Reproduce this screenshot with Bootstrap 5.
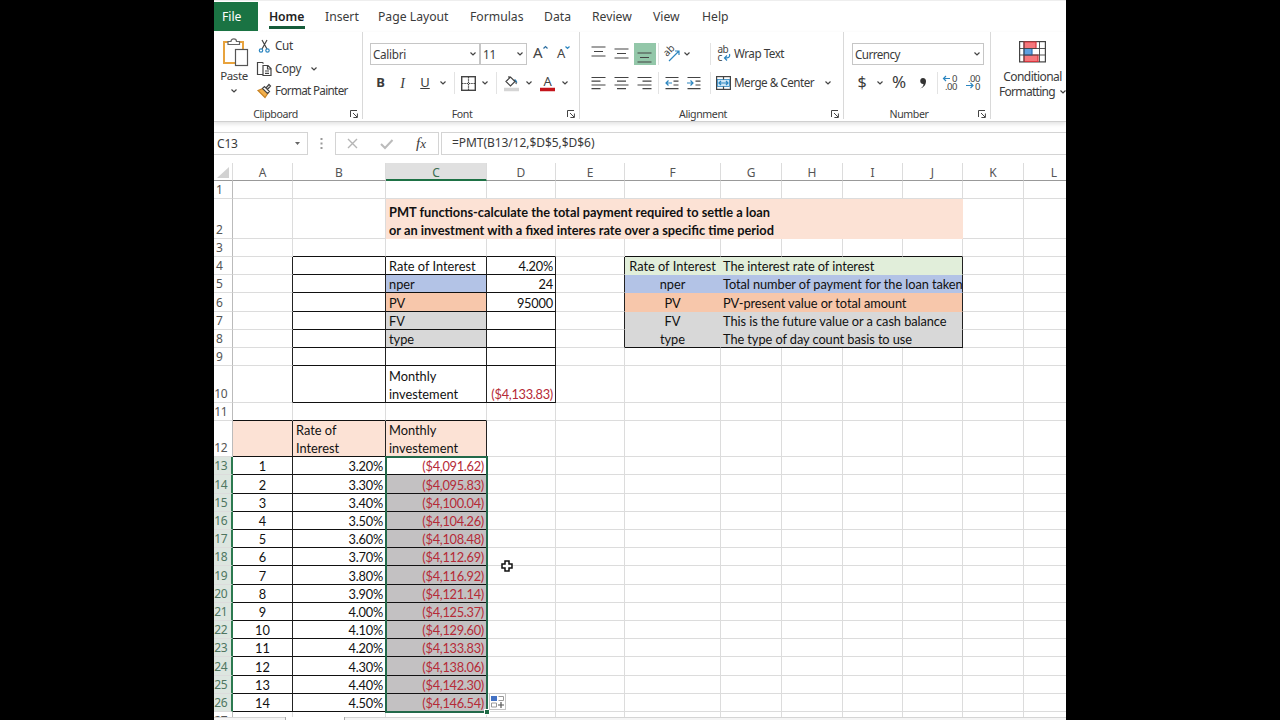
<!DOCTYPE html>
<html lang="en">
<head>
<meta charset="utf-8">
<title>Loan payment - Excel</title>
<link href="https://cdn.jsdelivr.net/npm/bootstrap@5.3.0/dist/css/bootstrap.min.css" rel="stylesheet">
<script src="https://cdn.jsdelivr.net/npm/bootstrap@5.3.0/dist/js/bootstrap.bundle.min.js"></script>
<style>
body{background:#000;height:720px;overflow:hidden;font-family:"Noto Sans","Open Sans",sans-serif;font-size:12px;color:#3b3b3b}
svg{display:block;overflow:visible;fill:none;stroke:#444;stroke-width:1.2;flex:none}
svg text{stroke:none;fill:#444;font-family:"Noto Sans",sans-serif}
.xl{width:852px;height:720px;margin-left:214px;background:#fff;border-top:1px solid #eee;overflow:hidden}
.tabs{height:31px;padding-top:1px;font-size:12.2px;line-height:30px}
.tabs a{color:#3b3b3b;text-decoration:none;white-space:nowrap}
.tabs .file{width:44px;height:29px;background:#1a7343;color:#fff;padding-left:8px;margin-right:11px}
.tabs .on{font-weight:600;color:#222;width:36px;margin-right:20px;height:27px;border-bottom:3px solid #165c3a;letter-spacing:-.1px}
.ribbon{height:90px;border-bottom:1px solid #d0d0d0;box-shadow:0 2px 4px #e2e2e2}
.grp{flex:none;height:87px;padding-top:11px;border-right:1px solid #d9d9d9;white-space:nowrap;position:relative}
.rw{display:grid;height:22px;margin-bottom:7px;align-items:center;justify-items:center}
.rw>.l{justify-self:start}
.cap{font-size:10.6px;letter-spacing:-.4px;position:absolute;left:0;right:0;bottom:-4px;text-align:center;line-height:18px}
.go{position:absolute;right:4px;bottom:1px}
.sep{width:1px;height:22px;background:#e3e3e3}
.sel{border:1px solid #c6c6c6;height:22px;width:100%;padding:0 3px 0 2px;line-height:20px;font-size:11.7px;letter-spacing:-.3px}
.cmd{font-size:11.7px}
.cmd svg:first-child{margin:0 2px}
.fbar{height:41px;padding-top:10px}
.fbar>div{height:23px;border:1px solid #d4d4d4;line-height:20px}
.sheet{position:relative;height:557px;overflow:hidden;font-family:Lato,sans-serif;font-size:12.8px;color:#111}
.rr{display:flex;width:871px}
.cc{flex:none;border-right:1px solid #dcdcdc;border-bottom:1px solid #dcdcdc;line-height:18px;white-space:nowrap;overflow:hidden;display:flex;align-items:flex-end;padding:0 3px}
.cc>span{margin-bottom:-1px}
.cc.kr{border-right-color:#222}.cc.kb{border-bottom-color:#111}
.cc.nr{border-right-color:transparent}.cc.nb{border-bottom-color:transparent}
.cc.c{justify-content:center}.cc.r{justify-content:flex-end;padding-right:2px;letter-spacing:-.2px}
.cc.neg{color:#b52a37;letter-spacing:-.28px}.cc.gs{background:#c3c1c2}
.cc.wide{letter-spacing:-.07px;padding-left:2px}
.peach{background:#fce2d5}.blue{background:#b3c3e6}.orange{background:#f7c7ab}.gray{background:#d8d8d8}.green{background:#e1eeda}
.hd,.rh{font-family:"Noto Sans",sans-serif;color:#555;font-size:12px}
.hd{justify-content:center;border-bottom-color:#999}
.hd>span{margin-bottom:-2px}
.hd.on{background:#e0e0e0;color:#3c6e50;border-bottom:2px solid #1e7145}
.hd.on>span{margin-bottom:-3px}
.rh{padding:0 5px 0 0;justify-content:flex-end;overflow:visible;border-right-color:#bbb;letter-spacing:-.5px}
.rh.n1{justify-content:flex-start;padding-left:2px}
.rh.on{background:#dde6e0;color:#4e7660;border-right:2px solid #2c7a50;padding-right:4px}
.selbox{position:absolute;left:171px;top:293px;width:103px;height:257px;border:2px solid #22694a}
.knob{position:absolute;left:271px;top:547px;width:4px;height:4px;background:#1e6b45;border:1px solid #fff;box-sizing:content-box;margin:-1px}
.qa{position:absolute;left:275px;top:530px;width:17px;height:17px;border:1px solid #c4c4c4;background:#fff}
.cursor{position:absolute;left:287px;top:397px}
.tabbar{position:absolute;left:0;right:0;top:554px;height:3px;background:#f5f5f5;border-top:1px solid #d5d5d5}
.tabbar div{position:absolute;left:71px;width:60px;height:3px;top:-1px;background:#fff;border:solid #aaa;border-width:0 1px}
</style>
</head>
<body>
<svg width="0" height="0" class="position-absolute">
<symbol id="v" viewBox="0 0 6 4" overflow="visible"><path d="M.5 .5 3 3 5.500 .5"/></symbol>
<symbol id="la" viewBox="0 0 8 8"><path d="M.5 7V.5H7M3 3l4 4M7.400 3.500v4h-4" stroke-width="1"/></symbol>
</svg>
<main class="xl">
<nav class="tabs d-flex">
<a class="file">File</a><a class="on">Home</a><a style="width:53px">Insert</a><a style="width:92px">Page Layout</a><a style="width:74px">Formulas</a><a style="width:48px">Data</a><a style="width:61px">Review</a><a style="width:49px">View</a><a>Help</a>
</nav>
<section class="ribbon d-flex">
 <div class="grp" style="width:149px">
  <div class="d-flex" style="margin-top:-9px">
   <div class="d-flex flex-column align-items-center" style="width:40px;padding-top:4px">
    <svg width="28" height="29" style="margin-left:4px"><path d="M6.500 4H2v21h11M18 4h3v7" stroke="#e8a33d" stroke-width="2"/><path d="M6 6.500V3.500h3C9 0 14.500 0 14.500 3.500h3v3z" fill="#fff" stroke="#666"/><rect x="13.500" y="11.500" width="12" height="16" fill="#fff" stroke="#555"/></svg>
    <span style="line-height:18px;font-size:11.500px;letter-spacing:-.4px">Paste</span>
    <svg width="6" height="4" style="margin-top:4px"><use href="#v"/></svg>
   </div>
   <div class="flex-grow-1" style="padding-left:1px">
    <div class="cmd d-flex align-items-center" style="height:23px;letter-spacing:-.3px"><svg width="16" height="16"><path d="M5 2l5 9M10 2 5 11"/><circle cx="4" cy="12.500" r="1.700" stroke="#2c86c0"/><circle cx="10.500" cy="12.500" r="1.700" stroke="#2c86c0"/></svg><span>Cut</span></div>
    <div class="cmd d-flex align-items-center" style="height:23px;letter-spacing:-.3px"><svg width="16" height="16"><path d="M5.500 13.500H.5V1.500h5l1 1M6 4.500h5l3 3v7H6zM10.500 4.500V8H14M8 10h4M8 12.300h4"/></svg><span>Copy</span><svg width="6" height="4" style="margin-left:10px"><use href="#v"/></svg></div>
    <div class="cmd d-flex align-items-center" style="height:22px;letter-spacing:-.68px"><svg width="16" height="16"><path d="M1 7.500 6 5.500l5 4.500-3 4.500z" fill="#f2b04d" stroke="#c98222"/><path d="M5.500 5.500l2-2 5 5-2 2zM9 5l3-3.500L13.500 3l-3 3.500" fill="#fff"/></svg><span>Format Painter</span></div>
   </div>
  </div>
  <div class="cap" style="right:25px">Clipboard</div><svg class="go" width="8" height="8"><use href="#la"/></svg>
 </div>
 <div class="grp" style="width:217px;padding-left:7px">
  <div class="rw" style="grid-template-columns:110px 47px 27px 20px">
   <div class="sel d-flex justify-content-between align-items-center">Calibri<svg width="6" height="4"><use href="#v"/></svg></div>
   <div class="sel d-flex justify-content-between align-items-center">11<svg width="6" height="4"><use href="#v"/></svg></div>
   <svg width="16" height="20"><text x="0" y="14" font-size="15">A</text><path d="M10.500 4.500l2-2 2 2" stroke="#2c6ea0"/></svg>
   <svg width="14" height="20"><text x="0" y="14" font-size="13">A</text><path d="M8.500 2.500l2 2 2-2" stroke="#2c86c0"/></svg>
  </div>
  <div class="rw" style="grid-template-columns:21px 23px 22px 14px 8px 20px 14px 8px 22px 13px 25px 10px">
   <b style="font-size:13px">B</b><i style="font-family:'Liberation Serif';font-size:14px">I</i><u style="font-size:13px">U</u><svg width="6" height="4"><use href="#v"/></svg><i class="sep"></i>
   <svg width="15" height="15"><rect x=".7" y=".7" width="13.600" height="13.600" stroke-width="1.400"/><path d="M7.500 1v13M1 7.500h13" stroke-dasharray="1.500 .8"/></svg><svg width="6" height="4"><use href="#v"/></svg><i class="sep"></i>
   <svg width="16" height="16"><path d="M3 6.500 7.500 2l4.500 4.500-4.500 4.500zM6 3.500V1M11 5c2 0 2.500 2 2 4"/><path d="M12 4.500l2 3" stroke="#2c86c0"/><path d="M1 14.500h15" stroke="#d5d5d5" stroke-width="3.500"/></svg><svg width="6" height="4"><use href="#v"/></svg>
   <svg width="16" height="16"><text x="3.500" y="10.500" font-size="13">A</text><path d="M0 14.500h15" stroke="#c4141b" stroke-width="3.500"/></svg><svg width="6" height="4"><use href="#v"/></svg>
  </div>
  <div class="cap" style="right:18px">Font</div><svg class="go" width="8" height="8"><use href="#la"/></svg>
 </div>
 <div class="grp" style="width:264px;padding-left:7px">
  <div class="rw" style="grid-template-columns:23px 23px 23px 4px 24px 6px 14px 12px 90px">
   <svg width="15" height="16"><path d="M.5 1h14M3 5.500h9M.5 10h14"/></svg>
   <svg width="15" height="14"><path d="M.5 2h14M3 6.500h9M.5 11h14"/></svg>
   <div class="d-flex align-items-end justify-content-center" style="width:22px;height:22px;background:#93c7a9"><svg width="15" height="14"><path d="M.5 2h14M3 6.500h9M.5 11h14"/></svg></div><i class="sep"></i>
   <svg width="16" height="16"><text transform="translate(3 11) rotate(-45)" font-size="10">ab</text><path d="M5 15 14.500 5.500M11 5h4v4" stroke="#2c86c0"/></svg><svg width="6" height="4"><use href="#v"/></svg><i></i><i class="sep"></i>
   <div class="cmd d-flex align-items-center l" style="letter-spacing:-.5px"><svg width="16" height="16" style="margin:0 2px 0 0"><text x="1.500" y="7" font-size="10">ab</text><text x="1.500" y="15" font-size="10">c</text><path d="M13.500 8c1 4-2 4-5 4M11 9.500 8.500 12l2.500 2.500" stroke="#2c86c0"/></svg>Wrap Text</div>
  </div>
  <div class="rw" style="grid-template-columns:23px 23px 23px 4px 24px 20px 0 12px 102px 20px">
   <svg width="15" height="14"><path d="M.5 1.500h14M.5 5.200h9M.5 9h14M.5 12.700h9"/></svg>
   <svg width="15" height="14"><path d="M.5 1.500h14M3 5.200h9M.5 9h14M3 12.700h9"/></svg>
   <svg width="15" height="14"><path d="M.5 1.500h14M5.500 5.200h9M.5 9h14M5.500 12.700h9"/></svg><i class="sep"></i>
   <svg width="14" height="14"><path d="M.5 1.500h13M8.500 5.200h5M8.500 9h5M.5 12.700h13"/><path d="M7 7H1M3.500 4.500 1 7l2.500 2.500" stroke="#2c86c0"/></svg>
   <svg width="14" height="14"><path d="M.5 1.500h13M8.500 5.200h5M8.500 9h5M.5 12.700h13"/><path d="M0 7h6M3.500 4.500 6 7 3.500 9.500" stroke="#2c86c0"/></svg><i></i><i class="sep"></i>
   <div class="cmd d-flex align-items-center l" style="letter-spacing:-.5px"><svg width="15" height="14" style="margin:0 3px 0 0"><rect x=".6" y=".6" width="13.800" height="12.800"/><rect x="1.500" y="3.500" width="12" height="7" fill="#cfe6f5" stroke="#2c86c0" stroke-width=".8"/><path d="M7.500 1v2.500M7.500 10.500V13"/><path d="M3 7h9M5 5 3 7l2 2M10 5l2 2-2 2" stroke="#2c86c0"/></svg>Merge &amp; Center</div>
   <svg width="6" height="4"><use href="#v"/></svg>
  </div>
  <div class="cap" style="right:17px">Alignment</div><svg class="go" width="8" height="8"><use href="#la"/></svg>
 </div>
 <div class="grp" style="width:147px;padding-left:8px">
  <div class="rw" style="grid-template-columns:132px"><div class="sel d-flex justify-content-between align-items-center"><span style="letter-spacing:-.55px">Currency</span><svg width="6" height="4"><use href="#v"/></svg></div></div>
  <div class="rw" style="grid-template-columns:20px 16px 22px 26px 2px 24px 22px">
   <span style="font-size:16px;line-height:20px;margin-top:-2px">$</span><svg width="6" height="4"><use href="#v"/></svg><span style="font-size:17px;line-height:20px;margin-top:-2px">%</span>
   <svg width="8" height="13"><path d="M4 1a3 3 0 1 0 .5 6C4.500 9 3 10.500 1 11.500c4-1 6-4 6-7.500C7 2 5.500 1 4 1z" fill="#333" stroke="none"/></svg><i class="sep"></i>
   <svg width="15" height="18"><text x="9" y="7.500" font-size="9.500">0</text><text x="2" y="15.500" font-size="9.500" textLength="12.500">.00</text><path d="M7 4.500H.5M3 2 .5 4.500 3 7" stroke="#2c86c0"/></svg>
   <svg width="15" height="18"><text x="2" y="7.500" font-size="9.500" textLength="12.500">.00</text><text x="9" y="15.500" font-size="9.500">0</text><path d="M0 11.500h7M4.500 9 7 11.500 4.500 14" stroke="#2c86c0"/></svg>
  </div>
  <div class="cap" style="right:16px">Number</div><svg class="go" width="8" height="8"><use href="#la"/></svg>
 </div>
 <div class="flex-grow-1 d-flex flex-column align-items-center text-nowrap" style="padding:9px 0 0 8px;line-height:15px">
  <svg width="27" height="22" style="margin-bottom:6px"><rect x=".6" y=".6" width="25.800" height="20.300" fill="#fff"/><path d="M5 1h12v6.500H5zM5 14h14v6.500H5z" fill="#f5777c" stroke="#d9363e"/><path d="M5 7.500h8V14H5z" fill="#5d9fe0" stroke="#2c6fb5"/><path d="M1 7.500h25M1 14h25M5 1v20M20.500 1v20" stroke-width=".9"/></svg>
  <span style="letter-spacing:-.55px">Conditional</span>
  <span class="d-flex align-items-center" style="letter-spacing:-.7px">Formatting<svg width="6" height="4" style="margin-left:5px"><use href="#v"/></svg></span>
 </div>
</section>
<section class="fbar d-flex">
 <div class="d-flex justify-content-between align-items-center" style="width:94px;padding:0 6px 0 3px;border-left:0;letter-spacing:-.2px">C13<svg width="6" height="4"><path d="M0 0h5L2.500 3z" fill="#666" stroke="none"/></svg></div>
 <div class="border-0 d-flex align-items-center justify-content-center" style="width:27px"><svg width="3" height="11"><path d="M1.500 0v11" stroke="#999" stroke-width="2" stroke-dasharray="2 2.500"/></svg></div>
 <div class="d-flex align-items-center" style="width:104px;padding-left:11px;gap:23px"><svg width="11" height="10"><path d="M1 0l9 9M10 0 1 9" stroke="#b5b5b5" stroke-width="1.400"/></svg><svg width="12" height="10"><path d="M0 5l4 4L11.500 1" stroke="#bbb" stroke-width="2"/></svg><i style="font-family:'Liberation Serif';font-size:15px">f<small>x</small></i></div>
 <div class="flex-grow-1" style="margin-left:2px;padding-left:10px;border-right:0;letter-spacing:-.06px">=PMT(B13/12,$D$5,$D$6)</div>
</section>
<section class="sheet" id="sheet"></section>
</main>
<script>
const W=[19,60,93,101,69,69,96,61,61,60,60,61,61];
const bottoms=[180,198,238,256,274,292,311,329,347,365,402,420,456,474,493,511,529,547,565,584,602,620,638,656,675,693,711,729];
const cell={},cls={};
const at=(r,c)=>r+'_'+c;
const add=(r,c,k)=>cls[at(r,c)]=(cls[at(r,c)]||'')+' '+k;
const put=(r,c,t,k='')=>{cell[at(r,c)]=t;add(r,c,k)};
// black borders on every cell, or round the outside only
function box(r1,c1,r2,c2,inner,span){
  for(let r=r1;r<=r2;r++){add(r,c1-1,'kr');for(let c=c1;c<=c2;c++)add(r,c,inner||c>=span?'kr':'nr')}
  for(let c=c1;c<=c2;c++){add(r1-1,c,'kb');for(let r=r1;r<=r2;r++)add(r,c,inner||r==r2?'kb':'nb')}
}
box(4,2,10,4,true);box(12,1,26,3,true);box(4,6,8,10,false,7);
put(4,3,'Rate of Interest');put(5,3,'nper','blue');put(6,3,'PV','orange');put(7,3,'FV','gray');put(8,3,'type','gray');
put(4,4,'4.20%','r');put(5,4,'24','r');put(6,4,'95000','r');
put(10,3,'Monthly<br>investement');put(10,4,'($4,133.83)','r neg');
put(12,1,'','peach');put(12,2,'Rate of<br>Interest','peach');put(12,3,'Monthly<br>investement','peach');
['Rate of Interest','nper','PV','FV','type'].forEach((t,i)=>put(4+i,6,t,'c '+['green','blue','orange','gray','gray'][i]));
['The interest rate of interest','Total number of payment for the loan taken','PV-present value or total amount','This is the future value or a cash balance','The type of day count basis to use'].forEach((t,i)=>put(4+i,7,t,'wide '+['green','blue','orange','gray','gray'][i]));
['4,091.62','4,095.83','4,100.04','4,104.26','4,108.48','4,112.69','4,116.92','4,121.14','4,125.37','4,129.60','4,133.83','4,138.06','4,142.30','4,146.54'].forEach((p,i)=>{
  put(13+i,1,i+1,'c');put(13+i,2,(3.2+i*.1).toFixed(2)+'%','r');put(13+i,3,'($'+p+')','r neg'+(i?' gs':''));
});
put(2,3,'PMT functions-calculate the total payment required to settle a loan<br>or an investment with a fixed interes rate over a specific time period','peach fw-bold nr nb');
const span={'2_3':8};for(let r=4;r<9;r++)span[at(r,7)]=4;
let h='<div class="rr">';
W.forEach((w,c)=>h+=`<div class="cc hd${c==3?' on':''}" style="width:${w}px;height:18px"><span>${c?'ABCDEFGHIJKL'[c-1]:'<svg width="13" height="15"><path d="M12 0v11H0z" fill="#d2d2d2" stroke="none"/></svg>'}</span></div>`);
h+='</div>';
for(let r=1;r<=27;r++){
  const H=bottoms[r]-bottoms[r-1];
  h+=`<div class="rr"><div class="cc rh${r<10?' n1':''}${r>12&&r<27?' on':''}" style="width:19px;height:${H}px"><span>${r}</span></div>`;
  for(let c=1;c<W.length;){
    const n=span[at(r,c)]||1,w=W.slice(c,c+n).reduce((a,b)=>a+b);
    h+=`<div class="cc${cls[at(r,c)]||''}" style="width:${w}px;height:${H}px"><span>${cell[at(r,c)]??''}</span></div>`;
    c+=n;
  }
  h+='</div>';
}
h+=`<div class="selbox"></div><div class="knob"></div>
<div class="qa"><svg width="15" height="15"><path d="M1 2h6v5H1z" fill="#4472c4" stroke="none"/><path d="M8.500 2.500h5v4h-5M1.500 9v4h5V9z" stroke="#999" stroke-width="1"/><path d="M11 8v6M8 11h6" stroke="#555"/></svg></div>
<svg class="cursor" width="12" height="12"><path d="M4 1h4v3h3v4H8v3H4V8H1V4h3z" fill="#fff" stroke="#111" stroke-width="1.500"/></svg>
<div class="tabbar"><div></div></div>`;
document.getElementById('sheet').innerHTML=h;
</script>
</body>
</html>
